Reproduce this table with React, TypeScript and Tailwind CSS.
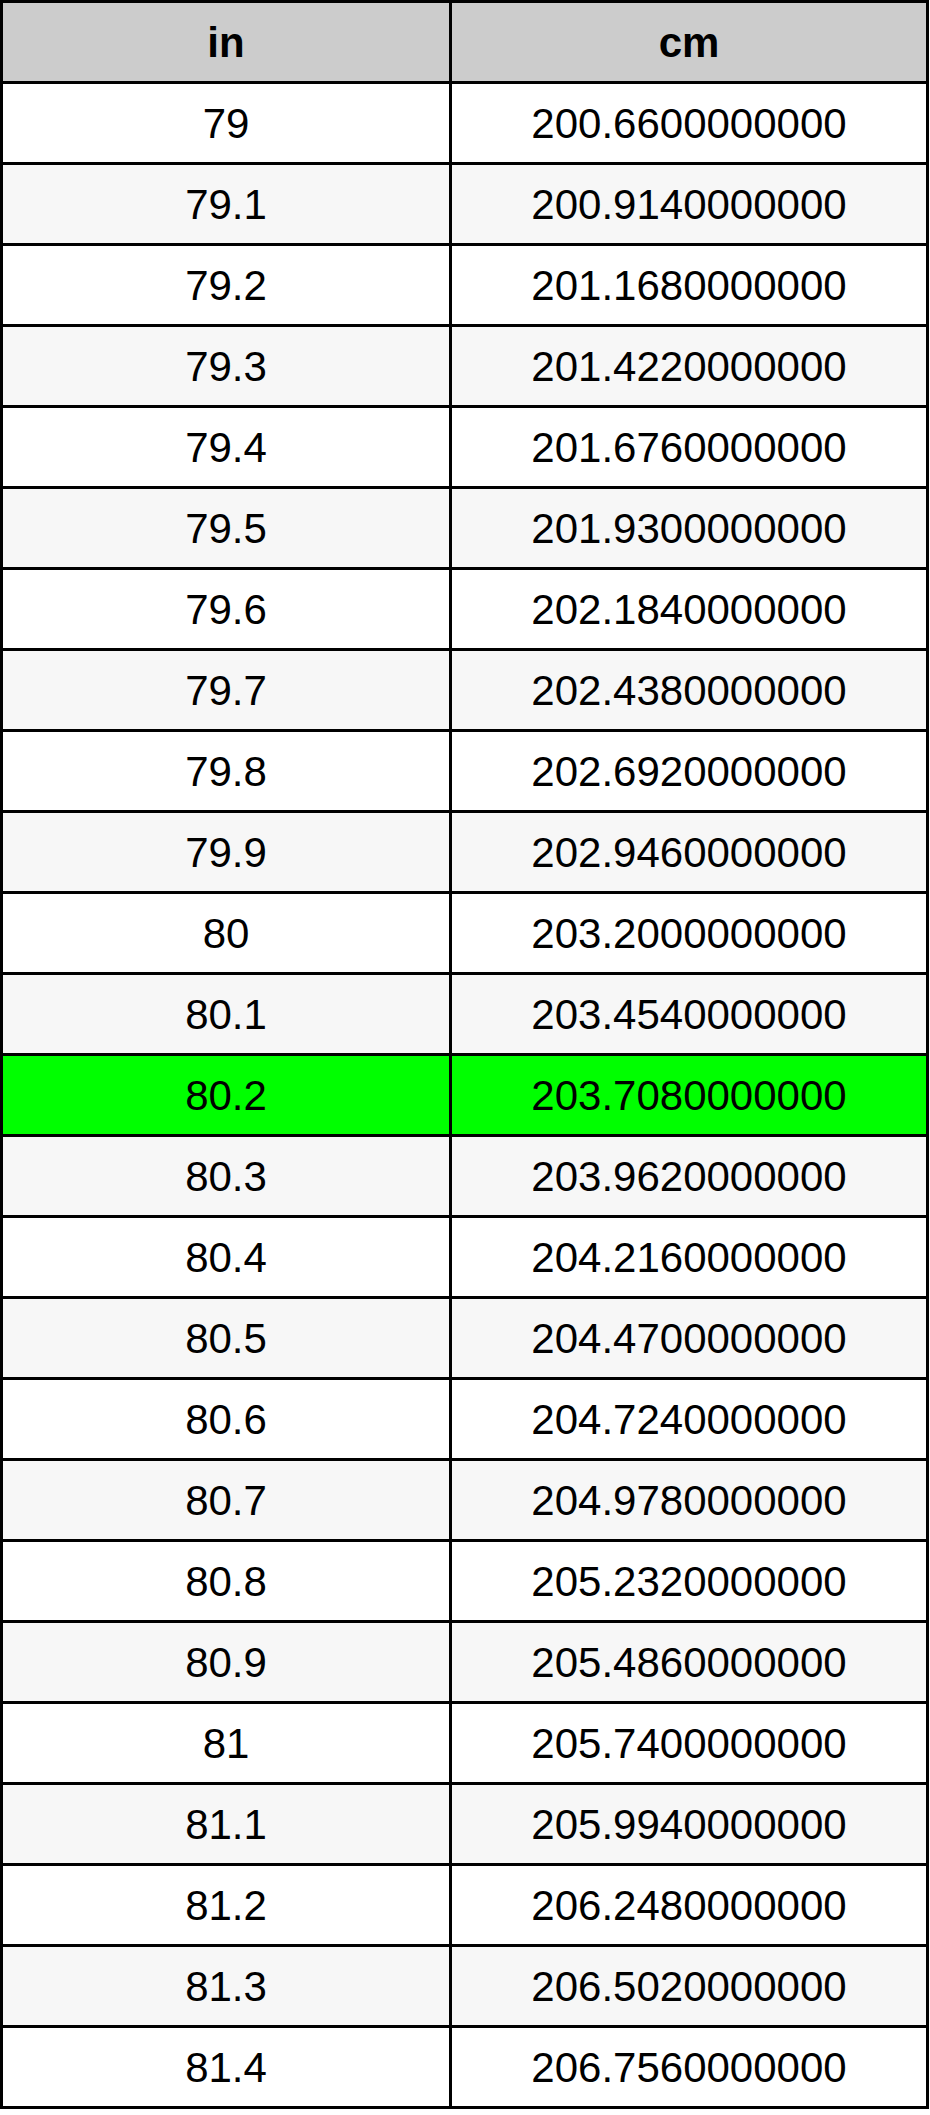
const START = 79
const FACTOR = 2.54
const HIGHLIGHT = 80.2

const rows = Array.from({ length: 25 }, (_, i) => {
  const inch = Math.round((START + i * 0.1) * 10) / 10
  return { inch, cm: (inch * FACTOR).toFixed(10) }
})

export default function App() {
  return (
    <div className="bg-white" style={{ fontFamily: '"Liberation Sans", Arial, sans-serif' }}>
      <table className="w-[929px] table-fixed border-collapse border-[3px] border-black text-[42px] text-black">
        <colgroup>
          <col className="w-[449px]" />
          <col />
        </colgroup>
        <thead>
          <tr className="h-[81px] bg-[#cccccc]">
            <th className="border-[3px] border-black p-0 text-center align-middle font-bold">in</th>
            <th className="border-[3px] border-black p-0 text-center align-middle font-bold">cm</th>
          </tr>
        </thead>
        <tbody>
          {rows.map((r, i) => {
            const bg = r.inch === HIGHLIGHT ? "bg-[#00ff00]" : i % 2 === 0 ? "bg-white" : "bg-[#f7f7f7]"
            return (
              <tr key={r.inch} className={`h-[81px] ${bg}`}>
                <td className="border-[3px] border-black p-0 text-center align-middle font-normal">{r.inch}</td>
                <td className="border-[3px] border-black p-0 text-center align-middle font-normal">{r.cm}</td>
              </tr>
            )
          })}
        </tbody>
      </table>
    </div>
  )
}
